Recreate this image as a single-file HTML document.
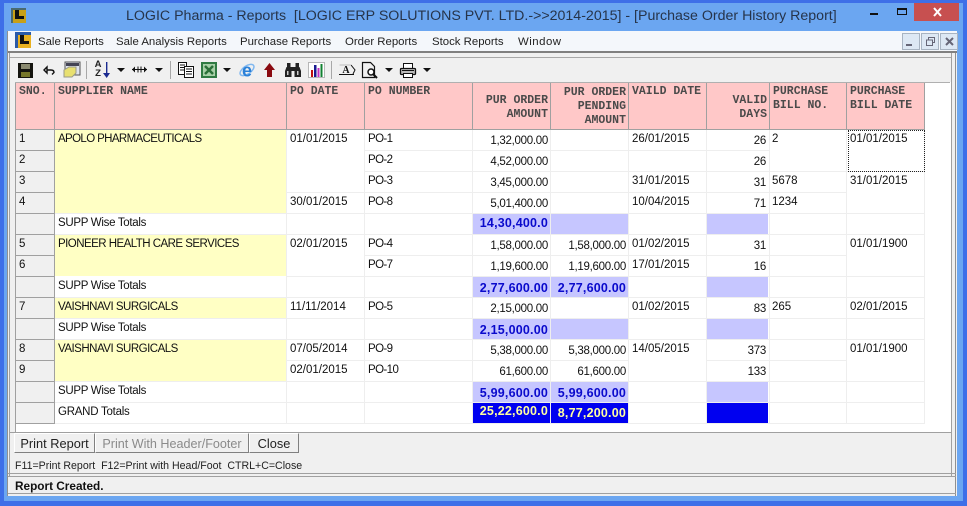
<!DOCTYPE html>
<html><head><meta charset="utf-8"><title>LOGIC Pharma</title>
<style>
html,body{margin:0;padding:0}
body{width:967px;height:506px;overflow:hidden;position:relative;background:#f0f0f0;font-family:"Liberation Sans",sans-serif;color:#000}
.a,.t,.r,.h,.b,.hl,.g{position:absolute}
.t{font-size:11.5px;line-height:14px;height:14px;white-space:nowrap;color:#111;margin-top:1px}
.p{letter-spacing:-.6px}
.s{letter-spacing:-.3px}
.n{letter-spacing:-.5px}
.r{font-size:11.5px;line-height:14px;height:14px;white-space:nowrap;text-align:right;color:#111;letter-spacing:-.28px}
.b{font-size:12.5px;font-weight:bold;line-height:14px;text-align:right;white-space:nowrap;color:#0a0acc;letter-spacing:.2px}
.y{color:#ffffa0}
.h{background:#ffc8c8;font:bold 11.5px/14px "Liberation Mono",monospace;color:#4a4a4a;white-space:pre;box-sizing:border-box;top:83px;height:46px;padding-top:2px}
.g{background:#f0f0f0;left:16px;width:38px;height:20px;border-bottom:1px solid #a0a0a0}
.m{position:absolute;top:35px;font-size:11.4px;line-height:14px;color:#222;white-space:nowrap}
.btn{position:absolute;top:433px;height:20px;box-sizing:border-box;background:#f0f0f0;border-left:1px solid #fff;border-top:1px solid #fff;border-right:1px solid #808080;border-bottom:1px solid #808080;font-size:12.8px;line-height:20px;text-align:center;color:#222;white-space:nowrap}
svg{position:absolute;overflow:visible}
</style></head><body>
<!-- window frame -->
<div class="a" style="left:0;top:0;width:967px;height:506px;background:#3e6fe8"></div>
<div class="a" style="left:4px;top:3px;width:959px;height:498px;background:#6ba6f1"></div>
<div class="a" style="left:8px;top:31px;width:949px;height:465px;background:#f0f0f0"></div>
<div class="a" style="left:914px;top:3px;width:45px;height:18px;background:#c75050"></div>
<svg style="left:933px;top:8px" width="9" height="8" fill="none" stroke="#fff" stroke-width="2"><path d="M1 0l7 8M8 0l-7 8"/></svg>
<div class="a" style="left:870px;top:13px;width:8px;height:2px;background:#111"></div>
<div class="a" style="left:897px;top:8px;width:8px;height:4px;border:1px solid #111;border-top:2px solid #111"></div>
<!-- title -->
<svg style="left:11px;top:8px" width="15" height="15"><rect width="15" height="15" fill="#c8a018"/><rect width="15" height="2" fill="#4a6a70"/><rect width="2" height="15" fill="#4a6a70"/><rect x="4" y="2" width="4" height="9" fill="#111"/><rect x="4" y="8" width="9" height="3" fill="#111"/></svg>
<div class="a" style="left:126px;top:7px;font-size:14.2px;line-height:18px;color:#26344a;white-space:pre">LOGIC Pharma - Reports  [LOGIC ERP SOLUTIONS PVT. LTD.-&gt;&gt;2014-2015] - [Purchase Order History Report]</div>
<!-- menu -->
<div class="a" style="left:8px;top:31px;width:949px;height:20px;background:#f4f7fb"></div>
<div class="a" style="left:8px;top:51px;width:949px;height:2px;background:#808080"></div>
<svg style="left:15px;top:32px" width="16" height="16"><rect width="16" height="16" fill="#e8b020"/><rect width="16" height="3" fill="#2a5aa8"/><rect width="3" height="16" fill="#2a5aa8"/><rect x="5" y="3" width="4" height="9" fill="#111"/><rect x="5" y="9" width="9" height="3" fill="#111"/></svg>
<div class="m" style="left:38px">Sale Reports</div>
<div class="m" style="left:116px">Sale Analysis Reports</div>
<div class="m" style="left:240px">Purchase Reports</div>
<div class="m" style="left:345px">Order Reports</div>
<div class="m" style="left:432px">Stock Reports</div>
<div class="m" style="left:518px;letter-spacing:.5px">Window</div>
<!-- mdi buttons -->
<div class="a" style="left:902px;top:33px;width:16px;height:15px;background:#dde8f4;border:1px solid #a8b4c2"></div>
<div class="a" style="left:921px;top:33px;width:16px;height:15px;background:#dde8f4;border:1px solid #a8b4c2"></div>
<div class="a" style="left:940px;top:33px;width:16px;height:15px;background:#dde8f4;border:1px solid #a8b4c2"></div>
<div class="a" style="left:906px;top:44px;width:6px;height:2px;background:#667"></div>
<svg style="left:926px;top:37px" width="9" height="9" fill="none" stroke="#667"><path d="M2.5 2.5V.5h6v5h-2M.5 3h6v5.5h-6z"/></svg>
<svg style="left:945px;top:37px" width="9" height="9" fill="none" stroke="#667" stroke-width="2"><path d="M1 1l7 7M8 1l-7 7"/></svg>
<!-- child frame -->
<div class="a" style="left:9px;top:53px;width:1px;height:424px;background:#a0a0a0"></div>
<div class="a" style="left:10px;top:57px;width:941px;height:1px;background:#a8a8a8"></div>
<div class="a" style="left:951px;top:53px;width:1px;height:424px;background:#a0a0a0"></div>
<div class="a" style="left:955px;top:53px;width:1px;height:443px;background:#909090"></div>
<div class="a" style="left:7px;top:31px;width:1px;height:465px;background:#909090"></div>
<!-- toolbar -->
<svg style="left:18px;top:63px" width="15" height="15"><rect width="15" height="15" fill="#151510"/><rect x="3" y="1" width="9" height="5" fill="#8a8a70"/><rect x="3" y="9" width="9" height="5" fill="#77772a"/></svg>
<svg style="left:43px;top:66px" width="12" height="9" fill="none" stroke="#111" stroke-width="1.4"><path d="M1 4l3-3v6zM4 4h4q3 0 3 2.500l-2 2"/></svg>
<svg style="left:64px;top:62px" width="16" height="15"><rect x="1" width="15" height="13" fill="#dfe4ee" stroke="#555"/><rect x="2" y="1" width="13" height="3" fill="#445"/><path d="M0 8l5-3h7v6l-4 4H0z" fill="#e8e070" stroke="#998"/></svg>
<div class="a" style="left:86px;top:61px;width:1px;height:18px;background:#a8a8a8"></div>
<div class="a" style="left:94px;top:60px;font:bold 9.5px/9px 'Liberation Sans',sans-serif;color:#222;width:8px;text-align:center">A<br>Z</div>
<svg style="left:103px;top:62px" width="7" height="16"><path d="M3 0h1.400v11H7L3.700 16 0 11h3z" fill="#1a2a90"/></svg>
<svg style="left:117px;top:68px" width="8" height="4"><path d="M0 0h8L4 4z" fill="#111"/></svg>
<svg style="left:132px;top:66px" width="16" height="7" stroke="#111" fill="#111"><path d="M0 3.500h15"/><path d="M0 3.500l3-3v6zM15 3.500l-3-3v6z" stroke="none"/><path d="M6 .5v6M9 .5v6"/></svg>
<svg style="left:155px;top:68px" width="8" height="4"><path d="M0 0h8L4 4z" fill="#111"/></svg>
<div class="a" style="left:170px;top:61px;width:1px;height:18px;background:#a8a8a8"></div>
<svg style="left:178px;top:62px" width="16" height="16" fill="#fff" stroke="#111"><path d="M.5.500h8v12h-8zM2 3h5M2 5.500h5M2 8h5"/><path d="M6.500 4.500h9v11h-9zM8 7h6M8 9.500h6M8 12h6"/></svg>
<svg style="left:201px;top:62px" width="16" height="16"><rect width="16" height="16" fill="#2f7a42"/><rect x="2" y="2" width="12" height="12" fill="#a8d0a8"/><path d="M4 4l8 8M12 4l-8 8" stroke="#2a7038" stroke-width="2.500"/></svg>
<svg style="left:223px;top:68px" width="8" height="4"><path d="M0 0h8L4 4z" fill="#111"/></svg>
<svg style="left:239px;top:62px" width="16" height="16"><ellipse cx="8" cy="8" rx="8" ry="4" fill="none" stroke="#80b8f0" stroke-width="1.500" transform="rotate(-35 8 8)"/><text x="8" y="14.500" font-family="Liberation Sans,sans-serif" font-weight="bold" font-size="18" text-anchor="middle" fill="#2a80d8">e</text></svg>
<svg style="left:264px;top:63px" width="11" height="14"><path d="M5.500 0L11 7H8v7H3V7H0z" fill="#8a0a10"/></svg>
<svg style="left:285px;top:63px" width="16" height="14" fill="#222"><rect x="2" y="0" width="3.500" height="4"/><rect x="10.500" y="0" width="3.500" height="4"/><path d="M1.500 4h5v10H0V8zM9.500 4h5L16 8v6H9.500z"/><rect x="6" y="4" width="4" height="4"/><rect x="2" y="8" width="1.500" height="4" fill="#ccc"/><rect x="12" y="8" width="1.500" height="4" fill="#ccc"/></svg>
<svg style="left:308px;top:62px" width="17" height="16"><rect x=".5" y=".5" width="16" height="15" fill="#fff" stroke="#777" stroke-dasharray="1 1"/><rect x="3" y="8" width="2" height="7" fill="#c01010"/><rect x="6" y="3" width="2.500" height="12" fill="#1a1a90"/><rect x="9.500" y="6" width="2" height="9" fill="#c030c0"/><rect x="12.500" y="2" width="2" height="13" fill="#108030"/></svg>
<div class="a" style="left:331px;top:61px;width:1px;height:18px;background:#a8a8a8"></div>
<svg style="left:339px;top:64px" width="17" height="12"><path d="M12 1l4 5-2 4" fill="none" stroke="#111"/><path d="M0 10.500h15" stroke="#111"/><path d="M.5 1h11.500" stroke="#bbb"/><text x="7" y="9" font-family="Liberation Serif,serif" font-size="10" font-weight="bold" text-anchor="middle" fill="#111">A</text></svg>
<svg style="left:362px;top:62px" width="17" height="17" fill="none" stroke="#111"><path d="M.5.500h8l4 4v11h-12z" stroke-width="1.200"/><circle cx="9" cy="10" r="3" fill="#fff" stroke-width="1.500"/><path d="M11 12l4 4" stroke-width="2"/></svg>
<svg style="left:385px;top:68px" width="8" height="4"><path d="M0 0h8L4 4z" fill="#111"/></svg>
<svg style="left:400px;top:63px" width="16" height="15"><path d="M3.500.5h9v5h-9z" fill="#fff" stroke="#111"/><rect x=".5" y="5.500" width="15" height="6" rx="1" fill="#bbb" stroke="#111" stroke-width="1.300"/><path d="M3.500 10.500h9v4h-9z" fill="#fff" stroke="#111"/><path d="M2 7.500h12" stroke="#111"/></svg>
<svg style="left:423px;top:68px" width="8" height="4"><path d="M0 0h8L4 4z" fill="#111"/></svg>
<!-- grid area -->
<div class="a" style="left:15px;top:82px;width:936px;height:350px;background:#fff"></div>
<div class="a" style="left:15px;top:82px;width:1px;height:350px;background:#a0a0a0"></div>
<div class="a" style="left:15px;top:82px;width:935px;height:1px;background:#b0b0b0"></div>
<div class="a" style="left:10px;top:432px;width:941px;height:1px;background:#a0a0a0"></div>
<!-- yellow -->
<div class="a" style="left:55px;top:130px;width:231px;height:83px;background:#ffffc4"></div>
<div class="a" style="left:55px;top:235px;width:231px;height:41px;background:#ffffc4"></div>
<div class="a" style="left:55px;top:298px;width:231px;height:20px;background:#ffffc4"></div>
<div class="a" style="left:55px;top:340px;width:231px;height:41px;background:#ffffc4"></div>
<!-- row lines -->
<div class="hl" style="left:287px;top:192px;width:78px;height:1px;background:#eee"></div>
<div class="hl" style="left:365px;top:150px;width:342px;height:1px;background:#eee"></div>
<div class="hl" style="left:365px;top:171px;width:560px;height:1px;background:#eee"></div>
<div class="hl" style="left:365px;top:192px;width:482px;height:1px;background:#eee"></div>
<div class="hl" style="left:707px;top:150px;width:62px;height:1px;background:#eee"></div>
<div class="hl" style="left:55px;top:213px;width:870px;height:1px;background:#eee"></div>
<div class="hl" style="left:55px;top:234px;width:870px;height:1px;background:#eee"></div>
<div class="hl" style="left:365px;top:255px;width:482px;height:1px;background:#eee"></div>
<div class="hl" style="left:287px;top:276px;width:638px;height:1px;background:#eee"></div>
<div class="hl" style="left:55px;top:297px;width:870px;height:1px;background:#eee"></div>
<div class="hl" style="left:55px;top:318px;width:870px;height:1px;background:#eee"></div>
<div class="hl" style="left:55px;top:339px;width:870px;height:1px;background:#eee"></div>
<div class="hl" style="left:287px;top:360px;width:342px;height:1px;background:#eee"></div>
<div class="hl" style="left:707px;top:360px;width:140px;height:1px;background:#eee"></div>
<div class="hl" style="left:55px;top:381px;width:870px;height:1px;background:#eee"></div>
<div class="hl" style="left:55px;top:402px;width:870px;height:1px;background:#eee"></div>
<div class="hl" style="left:55px;top:423px;width:870px;height:1px;background:#eee"></div>
<!-- column lines -->
<div class="a" style="left:286px;top:130px;width:1px;height:294px;background:#eee"></div>
<div class="a" style="left:364px;top:130px;width:1px;height:294px;background:#eee"></div>
<div class="a" style="left:472px;top:130px;width:1px;height:294px;background:#eee"></div>
<div class="a" style="left:550px;top:130px;width:1px;height:294px;background:#eee"></div>
<div class="a" style="left:628px;top:130px;width:1px;height:294px;background:#eee"></div>
<div class="a" style="left:706px;top:130px;width:1px;height:294px;background:#eee"></div>
<div class="a" style="left:769px;top:130px;width:1px;height:294px;background:#eee"></div>
<div class="a" style="left:846px;top:130px;width:1px;height:294px;background:#eee"></div>
<div class="a" style="left:924px;top:130px;width:1px;height:294px;background:#eee"></div>
<!-- headers -->
<div class="a" style="left:16px;top:129px;width:909px;height:1px;background:#a0a0a0"></div>
<div class="h" style="left:16px;width:38px;padding-left:3px">SNO.</div>
<div class="h" style="left:55px;width:231px;padding-left:3px">SUPPLIER NAME</div>
<div class="h" style="left:287px;width:77px;padding-left:3px">PO DATE</div>
<div class="h" style="left:365px;width:107px;padding-left:3px">PO NUMBER</div>
<div class="h" style="left:473px;width:77px;padding:11px 2px 0 0;text-align:right">PUR ORDER
AMOUNT</div>
<div class="h" style="left:551px;width:77px;padding:3px 2px 0 0;text-align:right">PUR ORDER
PENDING
AMOUNT</div>
<div class="h" style="left:629px;width:77px;padding-left:3px">VAILD DATE</div>
<div class="h" style="left:707px;width:62px;padding:11px 2px 0 0;text-align:right">VALID
DAYS</div>
<div class="h" style="left:770px;width:76px;padding-left:3px">PURCHASE
BILL NO.</div>
<div class="h" style="left:847px;width:77px;padding-left:3px">PURCHASE
BILL DATE</div>
<div class="a" style="left:54px;top:83px;width:1px;height:341px;background:#a0a0a0"></div>
<div class="a" style="left:286px;top:83px;width:1px;height:46px;background:#a0a0a0"></div>
<div class="a" style="left:364px;top:83px;width:1px;height:46px;background:#a0a0a0"></div>
<div class="a" style="left:472px;top:83px;width:1px;height:46px;background:#a0a0a0"></div>
<div class="a" style="left:550px;top:83px;width:1px;height:46px;background:#a0a0a0"></div>
<div class="a" style="left:628px;top:83px;width:1px;height:46px;background:#a0a0a0"></div>
<div class="a" style="left:706px;top:83px;width:1px;height:46px;background:#a0a0a0"></div>
<div class="a" style="left:769px;top:83px;width:1px;height:46px;background:#a0a0a0"></div>
<div class="a" style="left:846px;top:83px;width:1px;height:46px;background:#a0a0a0"></div>
<div class="a" style="left:924px;top:83px;width:1px;height:46px;background:#a0a0a0"></div>
<!-- sno gutter -->
<div class="g" style="top:130px"></div><div class="g" style="top:151px"></div><div class="g" style="top:172px"></div><div class="g" style="top:193px"></div><div class="g" style="top:214px"></div><div class="g" style="top:235px"></div><div class="g" style="top:256px"></div><div class="g" style="top:277px"></div><div class="g" style="top:298px"></div><div class="g" style="top:319px"></div><div class="g" style="top:340px"></div><div class="g" style="top:361px"></div><div class="g" style="top:382px"></div><div class="g" style="top:403px"></div>
<div class="t" style="left:19px;top:131px">1</div><div class="t" style="left:19px;top:152px">2</div><div class="t" style="left:19px;top:173px">3</div><div class="t" style="left:19px;top:194px">4</div><div class="t" style="left:19px;top:236px">5</div><div class="t" style="left:19px;top:257px">6</div><div class="t" style="left:19px;top:299px">7</div><div class="t" style="left:19px;top:341px">8</div><div class="t" style="left:19px;top:362px">9</div>
<!-- supplier -->
<div class="t" style="left:58px;top:131px;letter-spacing:-.62px">APOLO PHARMACEUTICALS</div>
<div class="t s" style="left:58px;top:215px">SUPP Wise Totals</div>
<div class="t" style="left:58px;top:236px;letter-spacing:-.53px">PIONEER HEALTH CARE SERVICES</div>
<div class="t s" style="left:58px;top:278px">SUPP Wise Totals</div>
<div class="t n" style="left:58px;top:299px">VAISHNAVI SURGICALS</div>
<div class="t s" style="left:58px;top:320px">SUPP Wise Totals</div>
<div class="t n" style="left:58px;top:341px">VAISHNAVI SURGICALS</div>
<div class="t s" style="left:58px;top:383px">SUPP Wise Totals</div>
<div class="t" style="left:58px;top:404px;letter-spacing:-.25px">GRAND Totals</div>
<!-- po date -->
<div class="t" style="left:290px;top:131px">01/01/2015</div>
<div class="t" style="left:290px;top:194px">30/01/2015</div>
<div class="t" style="left:290px;top:236px">02/01/2015</div>
<div class="t" style="left:290px;top:299px">11/11/2014</div>
<div class="t" style="left:290px;top:341px">07/05/2014</div>
<div class="t" style="left:290px;top:362px">02/01/2015</div>
<!-- po no -->
<div class="t p" style="left:368px;top:131px">PO-1</div><div class="t p" style="left:368px;top:152px">PO-2</div><div class="t p" style="left:368px;top:173px">PO-3</div><div class="t p" style="left:368px;top:194px">PO-8</div><div class="t p" style="left:368px;top:236px">PO-4</div><div class="t p" style="left:368px;top:257px">PO-7</div><div class="t p" style="left:368px;top:299px">PO-5</div><div class="t p" style="left:368px;top:341px">PO-9</div><div class="t p" style="left:368px;top:362px">PO-10</div>
<!-- amount shading -->
<div class="a" style="left:473px;top:214px;width:77px;height:20px;background:#c6c6ff"></div><div class="a" style="left:551px;top:214px;width:77px;height:20px;background:#c6c6ff"></div><div class="a" style="left:707px;top:214px;width:61px;height:20px;background:#c6c6ff"></div>
<div class="a" style="left:473px;top:277px;width:77px;height:20px;background:#c6c6ff"></div><div class="a" style="left:551px;top:277px;width:77px;height:20px;background:#c6c6ff"></div><div class="a" style="left:707px;top:277px;width:61px;height:20px;background:#c6c6ff"></div>
<div class="a" style="left:473px;top:319px;width:77px;height:20px;background:#c6c6ff"></div><div class="a" style="left:551px;top:319px;width:77px;height:20px;background:#c6c6ff"></div><div class="a" style="left:707px;top:319px;width:61px;height:20px;background:#c6c6ff"></div>
<div class="a" style="left:473px;top:382px;width:77px;height:20px;background:#c6c6ff"></div><div class="a" style="left:551px;top:382px;width:77px;height:20px;background:#c6c6ff"></div><div class="a" style="left:707px;top:382px;width:61px;height:20px;background:#c6c6ff"></div>
<div class="a" style="left:473px;top:403px;width:77px;height:20px;background:#0000f0"></div><div class="a" style="left:551px;top:403px;width:77px;height:20px;background:#0000f0"></div><div class="a" style="left:707px;top:403px;width:61px;height:20px;background:#0000f0"></div>
<!-- amounts -->
<div class="r" style="left:473px;width:75px;top:134px">1,32,000.00</div>
<div class="r" style="left:473px;width:75px;top:155px">4,52,000.00</div>
<div class="r" style="left:473px;width:75px;top:176px">3,45,000.00</div>
<div class="r" style="left:473px;width:75px;top:197px">5,01,400.00</div>
<div class="b" style="left:473px;width:75px;top:216px">14,30,400.0</div>
<div class="r" style="left:473px;width:75px;top:239px">1,58,000.00</div>
<div class="r" style="left:551px;width:75px;top:239px">1,58,000.00</div>
<div class="r" style="left:473px;width:75px;top:260px">1,19,600.00</div>
<div class="r" style="left:551px;width:75px;top:260px">1,19,600.00</div>
<div class="b" style="left:473px;width:75px;top:281px">2,77,600.00</div>
<div class="b" style="left:551px;width:75px;top:281px">2,77,600.00</div>
<div class="r" style="left:473px;width:75px;top:302px">2,15,000.00</div>
<div class="b" style="left:473px;width:75px;top:323px">2,15,000.00</div>
<div class="r" style="left:473px;width:75px;top:344px">5,38,000.00</div>
<div class="r" style="left:551px;width:75px;top:344px">5,38,000.00</div>
<div class="r" style="left:473px;width:75px;top:365px">61,600.00</div>
<div class="r" style="left:551px;width:75px;top:365px">61,600.00</div>
<div class="b" style="left:473px;width:75px;top:386px">5,99,600.00</div>
<div class="b" style="left:551px;width:75px;top:386px">5,99,600.00</div>
<div class="b y" style="left:473px;width:75px;top:404px">25,22,600.0</div>
<div class="b y" style="left:551px;width:75px;top:406px">8,77,200.00</div>
<!-- valid date -->
<div class="t" style="left:632px;top:131px">26/01/2015</div><div class="t" style="left:632px;top:173px">31/01/2015</div><div class="t" style="left:632px;top:194px">10/04/2015</div><div class="t" style="left:632px;top:236px">01/02/2015</div><div class="t" style="left:632px;top:257px">17/01/2015</div><div class="t" style="left:632px;top:299px">01/02/2015</div><div class="t" style="left:632px;top:341px">14/05/2015</div>
<!-- days -->
<div class="r" style="left:707px;width:59px;top:134px">26</div><div class="r" style="left:707px;width:59px;top:155px">26</div><div class="r" style="left:707px;width:59px;top:176px">31</div><div class="r" style="left:707px;width:59px;top:197px">71</div><div class="r" style="left:707px;width:59px;top:239px">31</div><div class="r" style="left:707px;width:59px;top:260px">16</div><div class="r" style="left:707px;width:59px;top:302px">83</div><div class="r" style="left:707px;width:59px;top:344px">373</div><div class="r" style="left:707px;width:59px;top:365px">133</div>
<!-- bill -->
<div class="t" style="left:772px;top:131px">2</div><div class="t" style="left:772px;top:173px">5678</div><div class="t" style="left:772px;top:194px">1234</div><div class="t" style="left:772px;top:299px">265</div>
<div class="a" style="left:848px;top:130px;width:75px;height:40px;border:1px dotted #222"></div>
<div class="t" style="left:850px;top:131px">01/01/2015</div><div class="t" style="left:850px;top:173px">31/01/2015</div><div class="t" style="left:850px;top:236px">01/01/1900</div><div class="t" style="left:850px;top:299px">02/01/2015</div><div class="t" style="left:850px;top:341px">01/01/1900</div>
<!-- buttons -->
<div class="btn" style="left:14px;width:81px">Print Report</div>
<div class="btn" style="left:95px;width:154px;color:#8a8a8a;font-size:12.6px">Print With Header/Footer</div>
<div class="btn" style="left:249px;width:50px">Close</div>
<div class="a" style="left:15px;top:459px;font-size:10.6px;line-height:14px;color:#222;white-space:pre">F11=Print Report  F12=Print with Head/Foot  CTRL+C=Close</div>
<div class="a" style="left:8px;top:473px;width:948px;height:1px;background:#a0a0a0"></div>
<div class="a" style="left:8px;top:476px;width:948px;height:1px;background:#a0a0a0"></div>
<div class="a" style="left:15px;top:479px;font-size:11.8px;font-weight:bold;line-height:14px;color:#111">Report Created.</div>
<div class="a" style="left:8px;top:493px;width:948px;height:1px;background:#a0a0a0"></div>
</body></html>
